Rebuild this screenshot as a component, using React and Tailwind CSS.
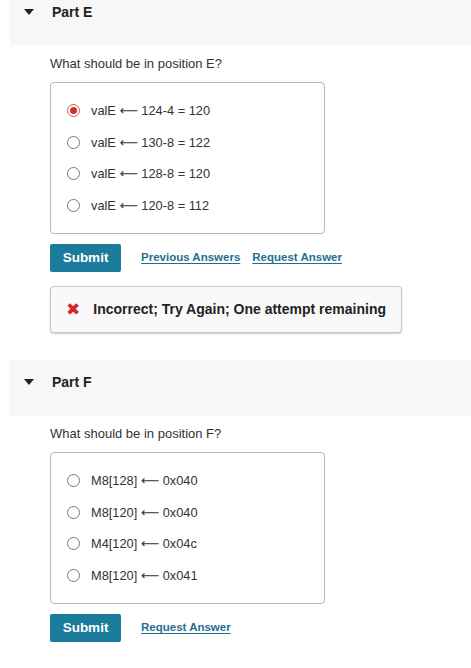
import { useState } from 'react';

const partE = ['valE \u27f5 124-4 = 120', 'valE \u27f5 130-8 = 122', 'valE \u27f5 128-8 = 120', 'valE \u27f5 120-8 = 112'];
const partF = ['M8[128] \u27f5 0x040', 'M8[120] \u27f5 0x040', 'M4[120] \u27f5 0x04c', 'M8[120] \u27f5 0x041'];

const Header = ({ title, first }) => (
  <div className={`ml-[10px] flex items-center bg-[#f7f7f7] ${first ? 'h-[45px] pb-[21px]' : 'h-[56px] pb-[12px]'}`}>
    <svg width="10" height="6" viewBox="0 0 10 6" className="ml-[14px]">
      <path d="M0 0 L10 0 L5 6 Z" fill="#222" />
    </svg>
    <span className="ml-[18px] text-[14px] font-bold text-[#222]">{title}</span>
  </div>
);

const Radio = ({ checked }) => (
  <span
    className={`flex h-[13px] w-[13px] shrink-0 items-center justify-center rounded-full border ${
      checked ? 'border-[#d9534f]' : 'border-[#777]'
    } bg-white`}
  >
    {checked && <span className="h-[7px] w-[7px] rounded-full bg-[#d22f35]" />}
  </span>
);

const Options = ({ items, selected, onSelect }) => (
  <div className="w-[275px] rounded-[4px] border border-[#b8b8b8] px-[16px] py-[12px]">
    {items.map((text, i) => (
      <div
        key={i}
        onClick={() => onSelect(i)}
        className="flex h-[31.5px] cursor-pointer items-center gap-[11px] text-[12.8px] text-[#333]"
      >
        <Radio checked={selected === i} />
        <span>{text}</span>
      </div>
    ))}
  </div>
);

const SubmitBtn = () => (
  <button className="h-[28px] w-[71px] rounded-[2px] bg-[#1a7b9b] text-[13.5px] font-bold text-white">
    Submit
  </button>
);

const LinkBtn = ({ children }) => (
  <a href="#" className="text-[11.5px] font-bold text-[#1f6f8f] underline underline-offset-2">
    {children}
  </a>
);

export default function App() {
  const [selE, setSelE] = useState(0);
  const [selF, setSelF] = useState(null);

  return (
    <div className="min-h-screen bg-white font-['Liberation_Sans','DejaVu_Sans',sans-serif]">
      <Header title="Part E" first />
      <div className="pl-[50px]">
        <p className="mt-[11px] text-[13px] leading-[15px] text-[#333]">What should be in position E?</p>
        <div className="mt-[11px]">
          <Options items={partE} selected={selE} onSelect={setSelE} />
        </div>
        <div className="mt-[10px] flex items-center gap-[20px]">
          <SubmitBtn />
          <div className="flex gap-[12px]">
            <LinkBtn>Previous Answers</LinkBtn>
            <LinkBtn>Request Answer</LinkBtn>
          </div>
        </div>
        <div className="mt-[14px] flex h-[47px] w-[352px] items-center rounded-[4px] border border-[#c8c8c8] bg-[#f9f9f9] pl-[15px] shadow-[0_1px_2px_rgba(0,0,0,0.2)]">
          <span className="text-[17px] font-bold leading-none text-[#d9262e]">{'\u2716'}</span>
          <span className="ml-[13px] text-[14px] font-bold text-[#222]">Incorrect; Try Again; One attempt remaining</span>
        </div>
      </div>

      <div className="mt-[27px]">
        <Header title="Part F" />
      </div>
      <div className="pl-[50px]">
        <p className="mt-[10px] text-[13px] leading-[15px] text-[#333]">What should be in position F?</p>
        <div className="mt-[11px]">
          <Options items={partF} selected={selF} onSelect={setSelF} />
        </div>
        <div className="mt-[10px] flex items-center gap-[20px]">
          <SubmitBtn />
          <LinkBtn>Request Answer</LinkBtn>
        </div>
      </div>
    </div>
  );
}
